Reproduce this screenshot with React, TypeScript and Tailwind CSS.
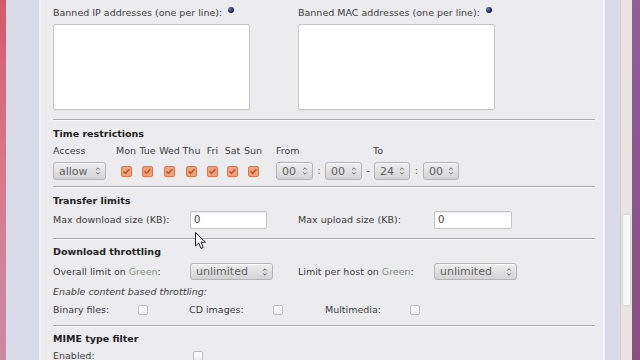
import React from "react";

function Dot() {
  return (
    <span className="inline-block w-[6px] h-[6px] rounded-full bg-[radial-gradient(circle_at_35%_35%,#6a7ab0,#141a3a_70%)] ml-[6px] relative top-[-3px]" />
  );
}

function Arrows() {
  return (
    <svg width="6" height="10" viewBox="0 0 6 10" className="shrink-0">
      <path d="M1.2 3.6 L3 1.8 L4.8 3.6" fill="none" stroke="#6a6a6a" strokeWidth="1" />
      <path d="M1.2 6.4 L3 8.2 L4.8 6.4" fill="none" stroke="#6a6a6a" strokeWidth="1" />
    </svg>
  );
}

function Sel({ cls, text }: { cls: string; text: string }) {
  return (
    <div
      className={`${cls} rounded-[3px] border border-[#b4b4b8] bg-gradient-to-b from-[#eeeeee] to-[#d3d3d6] shadow-[inset_0_1px_0_#fafafa] text-[11px] leading-none text-[#5e5e5e] pl-[5px] pr-[4px] flex items-center justify-between`}
    >
      <span>{text}</span>
      <Arrows />
    </div>
  );
}

function Checked() {
  return (
    <svg width="11" height="11" viewBox="0 0 11 11">
      <rect x="0.5" y="0.5" width="10" height="10" rx="1.5" fill="#f0a27a" stroke="#d9774a" />
      <path d="M2.6 5.4 L4.6 7.4 L8.4 3.2" fill="none" stroke="#c0582c" strokeWidth="1.6" />
    </svg>
  );
}

function Box() {
  return (
    <div className="w-[10px] h-[10px] rounded-[2px] border border-[#bdbdc2] bg-gradient-to-b from-[#ffffff] to-[#f0f0f2]" />
  );
}

function Sep() {
  return (
    <div className="w-[542px]">
      <div className="h-[1px] bg-[#a9a9ae]" />
      <div className="h-[1px] bg-[#f8f8fa]" />
    </div>
  );
}

function Input({ cls }: { cls: string }) {
  return (
    <div
      className={`${cls} h-[18px] bg-white border border-[#c4c4c8] rounded-[2px] shadow-[inset_0_1px_1px_rgba(0,0,0,0.08)] pl-[3px] flex items-center text-[10px] text-[#444]`}
    >
      0
    </div>
  );
}

const days = [
  { d: "Mon", w: "w-[22px]" },
  { d: "Tue", w: "w-[21px]" },
  { d: "Wed", w: "w-[23px]" },
  { d: "Thu", w: "w-[21px]" },
  { d: "Fri", w: "w-[21px]" },
  { d: "Sat", w: "w-[19px]" },
  { d: "Sun", w: "w-[22px]" },
];

function Green() {
  return <span className="text-[#86927f]">Green</span>;
}

export default function App() {
  return (
    <div className="relative w-[640px] h-[360px] overflow-hidden flex font-['DejaVu_Sans',sans-serif] text-[9.5px] leading-[12px] text-[#3c3c3c]">
      <div className="w-[6px] bg-gradient-to-b from-[#d4586c] via-[#d77a8c] to-[#c98aa0]" />
      <div className="w-[33px] bg-[#dadbe8]" />
      <div className="w-[2px] bg-[#f1f1f6]" />
      <main className="w-[562px] bg-[#ececef] pl-[12px] pt-[7px] flex flex-col">
        {/* banned */}
        <div className="flex">
          <div className="w-[245px]">
            <div className="flex items-center h-[12px]">
              Banned IP addresses (one per line):
              <Dot />
            </div>
            <div className="mt-[5px] w-[197px] h-[86px] bg-white border border-[#c6c6cb] rounded-[2px] shadow-[0_1px_1px_rgba(0,0,0,0.05)]" />
          </div>
          <div>
            <div className="flex items-center h-[12px]">
              Banned MAC addresses (one per line):
              <Dot />
            </div>
            <div className="mt-[5px] w-[197px] h-[86px] bg-white border border-[#c6c6cb] rounded-[2px] shadow-[0_1px_1px_rgba(0,0,0,0.05)]" />
          </div>
        </div>
        <div className="mt-[9px]">
          <Sep />
        </div>

        {/* time restrictions */}
        <div className="mt-[7px] font-bold text-[#222] h-[12px]">Time restrictions</div>
        <div className="mt-[5px] flex">
          <div className="w-[62px] flex flex-col">
            <div className="h-[12px]">Access</div>
            <div className="mt-[5px]">
              <Sel cls="w-[53px] h-[18px]" text="allow" />
            </div>
          </div>
          {days.map((x) => (
            <div key={x.d} className={`${x.w} flex flex-col items-center`}>
              <div className="h-[12px] whitespace-nowrap">{x.d}</div>
              <div className="mt-[5px] h-[18px] flex items-center">
                <Checked />
              </div>
            </div>
          ))}
          <div className="ml-[12px] flex flex-col">
            <div className="h-[12px] flex">
              <span className="w-[97px]">From</span>
              <span>To</span>
            </div>
            <div className="mt-[5px] flex items-center h-[18px] text-[10px] text-[#555]">
              <Sel cls="w-[37px] h-[18px]" text="00" />
              <span className="w-[12px] text-center">:</span>
              <Sel cls="w-[37px] h-[18px]" text="00" />
              <span className="w-[12px] text-center">-</span>
              <Sel cls="w-[36px] h-[18px]" text="24" />
              <span className="w-[13px] text-center">:</span>
              <Sel cls="w-[36px] h-[18px]" text="00" />
            </div>
          </div>
        </div>
        <div className="mt-[6px]">
          <Sep />
        </div>

        {/* transfer limits */}
        <div className="mt-[7px] font-bold text-[#222] h-[12px]">Transfer limits</div>
        <div className="mt-[4px] flex items-center h-[18px]">
          <span className="w-[137px]">Max download size (KB):</span>
          <Input cls="w-[77px]" />
          <span className="ml-[31px] w-[136px]">Max upload size (KB):</span>
          <Input cls="w-[78px]" />
        </div>
        <div className="mt-[9px]">
          <Sep />
        </div>

        {/* download throttling */}
        <div className="mt-[6px] font-bold text-[#222] h-[12px]">Download throttling</div>
        <div className="mt-[5px] flex items-center h-[17px]">
          <span className="w-[137px]">
            Overall limit on <Green />:
          </span>
          <Sel cls="w-[83px] h-[17px]" text="unlimited" />
          <span className="ml-[25px] w-[136px]">
            Limit per host on <Green />:
          </span>
          <Sel cls="w-[83px] h-[17px]" text="unlimited" />
        </div>
        <div className="mt-[6px] italic h-[12px]">Enable content based throttling:</div>
        <div className="mt-[6px] flex items-center h-[12px]">
          <span className="w-[85px]">Binary files:</span>
          <div className="w-[51px]">
            <Box />
          </div>
          <span className="w-[84px]">CD images:</span>
          <div className="w-[52px]">
            <Box />
          </div>
          <span className="w-[85px]">Multimedia:</span>
          <Box />
        </div>
        <div className="mt-[9px]">
          <Sep />
        </div>

        {/* mime */}
        <div className="mt-[6px] font-bold text-[#222] h-[12px]">MIME type filter</div>
        <div className="mt-[5px] flex items-center h-[12px]">
          <span className="w-[140px]">Enabled:</span>
          <Box />
        </div>
      </main>
      <div className="w-[2px] bg-[#f3f3f7]" />
      <div className="w-[15px] bg-[#d9d9e7]" />
      <div className="w-[12px] bg-[#e9e3e2] border-l border-[#d0ccd0] flex flex-col">
        <div className="h-[214px]" />
        <div className="h-[92px] mx-[1px] bg-[#f7f7f7] border border-[#d6d6d6] rounded-[2px]" />
      </div>
      <div className="flex-1 bg-gradient-to-b from-[#8e5f9a] to-[#86507e]" />

      {/* mouse cursor overlay */}
      <svg className="absolute left-[195px] top-[232px]" width="12" height="18" viewBox="0 0 12 18">
        <path
          d="M0.5 0.5 L0.5 14 L3.7 11 L6 16.5 L8.2 15.5 L6 10.2 L10.5 10.2 Z"
          fill="#ffffff"
          stroke="#1a1a1a"
          strokeWidth="1"
          strokeLinejoin="round"
        />
      </svg>
    </div>
  );
}
